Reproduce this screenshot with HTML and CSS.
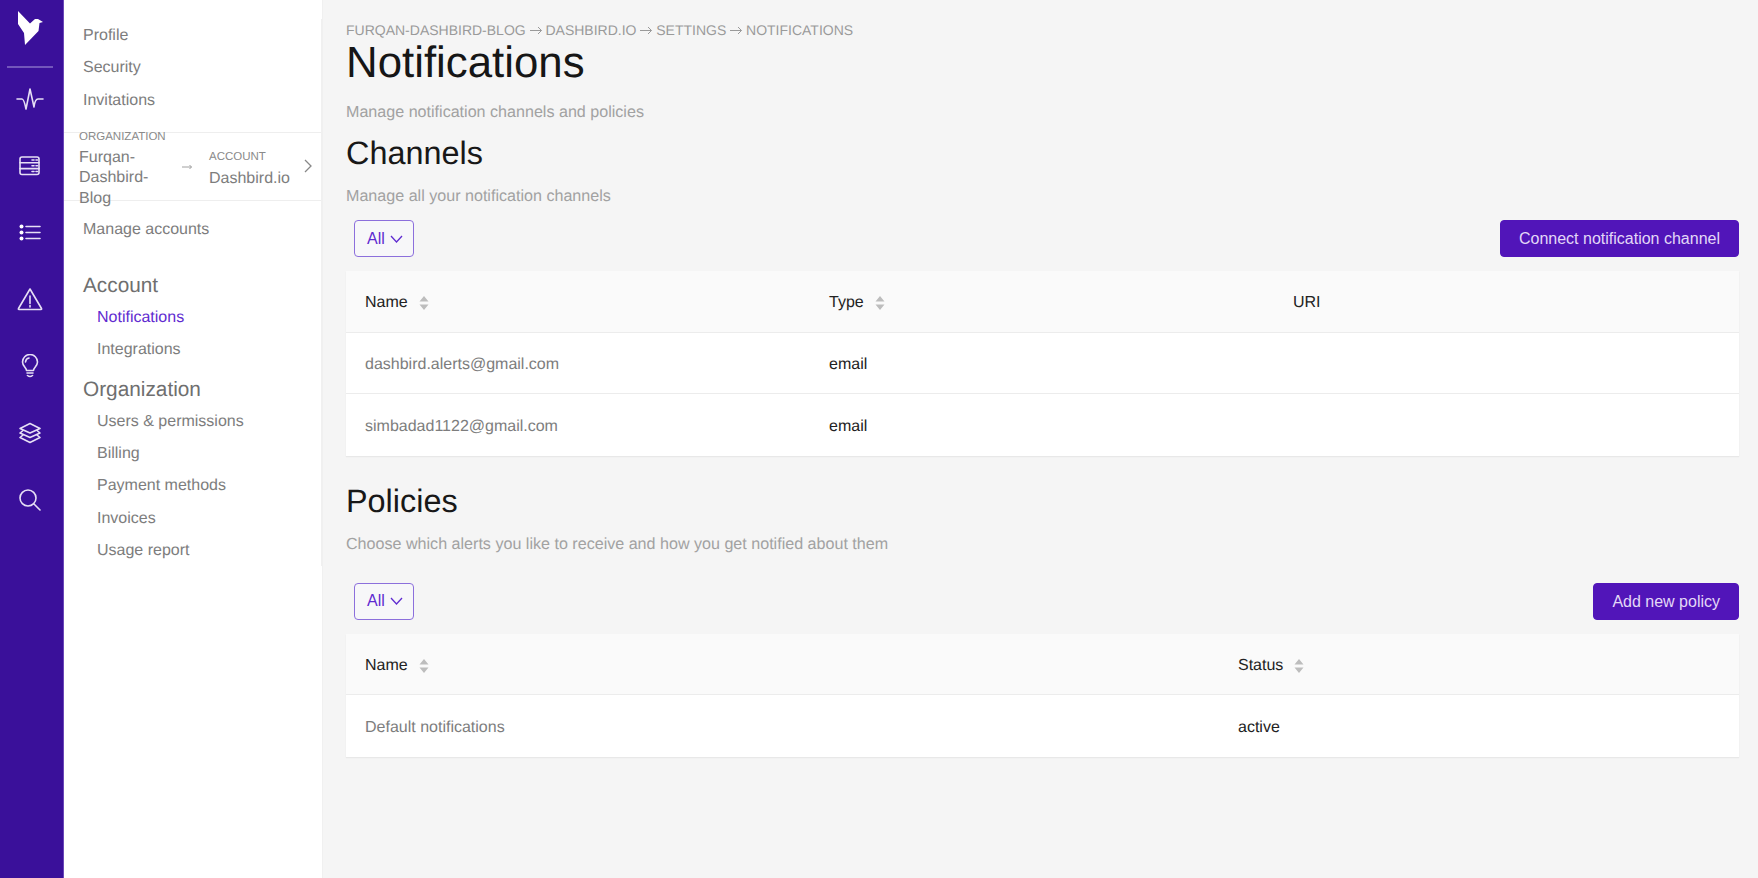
FILE: index.html
```html
<!DOCTYPE html>
<html lang="en">
<head>
<meta charset="utf-8">
<title>Notifications</title>
<link rel="stylesheet" href="styles.css">
</head>
<body>
<div class="app">
  <nav class="rail">
    <div class="logo">
      <svg width="27" height="36" viewBox="0 0 27 36"><path class="fill" d="M1 1 L13 13.500 L18 9 L21 9 L26 12 L22.500 13 L21.500 21 L8 35 L7 23 L1 14 Z"/></svg>
    </div>
    <div class="rail-sep"></div>
    <div class="rail-items">
      <a class="rail-item"><svg width="28" height="24" viewBox="0 0 28 24"><path d="M1 12 H6 Q8 12 10 22 L14 2 L18 20 Q19 12 22 12 H27"/></svg></a>
      <a class="rail-item"><svg width="22" height="20" viewBox="0 0 22 20"><rect x="1" y="1" width="19" height="17.500" rx="2"/><path d="M1 6.800H20M1 12.600H20M13 4H15M17 4H18.500M13 9.700H15M17 9.700H18.500M13 15.500H15M17 15.500H18.500"/></svg></a>
      <a class="rail-item"><svg width="22" height="20" viewBox="0 0 22 20"><path d="M7 4.500H21M7 10.500H21M7 16.500H21"/><circle class="fill" cx="2.500" cy="4.500" r="2"/><circle class="fill" cx="2.500" cy="10.500" r="2"/><circle class="fill" cx="2.500" cy="16.500" r="2"/></svg></a>
      <a class="rail-item"><svg width="26" height="24" viewBox="0 0 26 24"><path d="M13 2 L24.500 21.500 Q25 22.500 24 22.500 H2 Q1 22.500 1.500 21.500 Z"/><path d="M13 9V16.500M13 18.500V20"/></svg></a>
      <a class="rail-item"><svg width="18" height="24" viewBox="0 0 18 24"><path d="M5.500 16.500 C5.500 13.500 1.500 12 1.500 8 A7.500 7.500 0 0 1 16.500 8 C16.500 12 12.500 13.500 12.500 16.500 Z"/><path d="M4.500 8 A4.500 4.500 0 0 1 8 4M6 19H12M6.500 21.500Q9 23.500 11.500 21.500"/></svg></a>
      <a class="rail-item"><svg width="22" height="22" viewBox="0 0 22 22"><path d="M11 1.500 L21 6.500 L11 11 L1 6.500 Z"/><path d="M4 8.500 L1 11 L11 15.500 L21 11 L18 8.500"/><path d="M4 13 L1 15.500 L11 20.500 L21 15.500 L18 13"/></svg></a>
      <a class="rail-item"><svg width="22" height="22" viewBox="0 0 22 22"><circle cx="9" cy="9" r="8"/><path d="M15 15L21 21"/></svg></a>
    </div>
  </nav>

  <aside class="sidebar">
    <div class="panel">
      <ul class="menu menu-top">
        <li>Profile</li>
        <li>Security</li>
        <li>Invitations</li>
      </ul>
      <div class="switcher">
        <div class="org">
          <div class="caption">ORGANIZATION</div>
          <div class="org-name">Furqan-<br>Dashbird-<br>Blog</div>
        </div>
        <svg class="switch-arrow" width="10" height="6" viewBox="0 0 10 6"><path d="M0 3H9.500M7.500 1L9.500 3L7.500 5"/></svg>
        <div class="acct">
          <div class="caption">ACCOUNT</div>
          <div class="acct-name">Dashbird.io</div>
        </div>
        <svg class="switch-chevron" width="8" height="14" viewBox="0 0 8 14"><path d="M1 1 L7 7 L1 13"/></svg>
      </div>
      <ul class="menu">
        <li>Manage accounts</li>
      </ul>
      <h3 class="side-head side-head-account">Account</h3>
      <ul class="menu menu-sub">
        <li class="active">Notifications</li>
        <li>Integrations</li>
      </ul>
      <h3 class="side-head side-head-org">Organization</h3>
      <ul class="menu menu-sub">
        <li>Users &amp; permissions</li>
        <li>Billing</li>
        <li>Payment methods</li>
        <li>Invoices</li>
        <li>Usage report</li>
      </ul>
    </div>
  </aside>

  <main class="main">
    <div class="crumbs">FURQAN-DASHBIRD-BLOG <svg class="ca" width="12" height="9" viewBox="0 0 12 9"><path d="M0 4.500H11.500M8 1L11.500 4.500L8 8"/></svg> DASHBIRD.IO <svg class="ca" width="12" height="9" viewBox="0 0 12 9"><path d="M0 4.500H11.500M8 1L11.500 4.500L8 8"/></svg> SETTINGS <svg class="ca" width="12" height="9" viewBox="0 0 12 9"><path d="M0 4.500H11.500M8 1L11.500 4.500L8 8"/></svg> NOTIFICATIONS</div>
    <h1 class="title">Notifications</h1>
    <p class="sub sub-top">Manage notification channels and policies</p>

    <h2 class="section">Channels</h2>
    <p class="sub sub-channels">Manage all your notification channels</p>
    <div class="toolbar">
      <button class="filter">All <svg width="13" height="8" viewBox="0 0 13 8"><path d="M1 1 L6.500 7 L12 1"/></svg></button>
      <button class="primary">Connect notification channel</button>
    </div>
    <div class="table">
      <div class="row head cols3">
        <div class="cell">Name <svg class="sort" width="10" height="14" viewBox="0 0 10 14"><path d="M5 0L9.500 5.500H0.500ZM5 14L0.500 8.500H9.500Z"/></svg></div>
        <div class="cell">Type <svg class="sort" width="10" height="14" viewBox="0 0 10 14"><path d="M5 0L9.500 5.500H0.500ZM5 14L0.500 8.500H9.500Z"/></svg></div>
        <div class="cell">URI</div>
      </div>
      <div class="row cols3">
        <div class="cell muted">dashbird.alerts@gmail.com</div>
        <div class="cell">email</div>
        <div class="cell"></div>
      </div>
      <div class="row cols3">
        <div class="cell muted">simbadad1122@gmail.com</div>
        <div class="cell">email</div>
        <div class="cell"></div>
      </div>
    </div>

    <h2 class="section section-policies">Policies</h2>
    <p class="sub sub-policies">Choose which alerts you like to receive and how you get notified about them</p>
    <div class="toolbar toolbar-policies">
      <button class="filter">All <svg width="13" height="8" viewBox="0 0 13 8"><path d="M1 1 L6.500 7 L12 1"/></svg></button>
      <button class="primary">Add new policy</button>
    </div>
    <div class="table">
      <div class="row head cols2">
        <div class="cell">Name <svg class="sort" width="10" height="14" viewBox="0 0 10 14"><path d="M5 0L9.500 5.500H0.500ZM5 14L0.500 8.500H9.500Z"/></svg></div>
        <div class="cell">Status <svg class="sort" width="10" height="14" viewBox="0 0 10 14"><path d="M5 0L9.500 5.500H0.500ZM5 14L0.500 8.500H9.500Z"/></svg></div>
      </div>
      <div class="row cols2">
        <div class="cell muted">Default notifications</div>
        <div class="cell">active</div>
      </div>
    </div>
  </main>
</div>
</body>
</html>
```

FILE: styles.css
```css
* { box-sizing: border-box; }
html, body { margin: 0; height: 100%; overflow: hidden; }
body {
  font-family: "Liberation Sans", Arial, sans-serif;
  font-size: 16px;
  color: #111;
  background: #f5f5f5;
  text-rendering: geometricPrecision;
}
.app { display: flex; height: 878px; }

.rail {
  width: 64px;
  flex: none;
  background: #3a109a;
  border-right: 1px solid #6b48b8;
  padding-right: 3px;
  display: flex;
  flex-direction: column;
  align-items: center;
}
.rail svg { fill: none; stroke: #e6dff5; stroke-width: 1.600; stroke-linecap: round; stroke-linejoin: round; display: block; }
.rail svg .fill { fill: #fff; stroke: none; }
.logo { height: 66px; padding-top: 10px; width: 100%; display: flex; justify-content: center; }
.rail-sep { width: 46px; height: 2px; background: #7356bb; }
.rail-items { display: flex; flex-direction: column; margin-top: -2.500px; }
.rail-item { height: 66.800px; display: flex; align-items: center; justify-content: center; }

.sidebar {
  width: 259px;
  flex: none;
  background: #fff;
  border-right: 1px solid #f0f0f0;
  color: #7d7d7d;
  padding-top: 19px;
}
.panel { height: 547px; margin-right: -1px; border-right: 2px solid #f0f0f0; }
.menu { list-style: none; margin: 0; padding: 0 0 0 19px; }
.menu li { height: 32.300px; line-height: 34px; white-space: nowrap; }
.menu-top { margin-bottom: 16px; }
.menu-sub { padding-left: 33px; }
.menu .active { color: #5f2bd0; }

.switcher {
  height: 69px;
  margin-bottom: 12px;
  border-top: 1px solid #eeeeee;
  border-bottom: 1px solid #eeeeee;
  padding-left: 15px;
  display: flex;
  align-items: center;
}
.caption { font-size: 11.500px; line-height: 14px; color: #8a8a8a; }
.org { width: 97px; padding-top: 7px; }
.org-name { line-height: 20.500px; margin-top: 3.500px; }
.acct { width: 95px; padding-top: 6px; }
.acct-name { line-height: 20px; margin-top: 5px; }
.switch-arrow { width: 33px; padding: 0 17px 0 6px; fill: none; stroke: #a0a0a0; stroke-width: 1; overflow: visible; height: 6px; margin-top: 2px; flex: none; }
.switch-chevron { fill: none; stroke: #888; stroke-width: 1.300; flex: none; }

.side-head { margin: 0 0 1px; padding-left: 19px; font-size: 20.800px; font-weight: 400; line-height: 28px; color: #6f6f6f; }
.side-head-account { margin-top: 26.600px; }
.side-head-org { margin-top: 10.300px; }

.main { flex: 1; padding: 0 19px 0 23px; min-width: 0; }
.crumbs { padding-top: 21px; font-size: 14px; line-height: 18px; color: #9a9a9a; white-space: nowrap; }
.ca { fill: none; stroke: #9a9a9a; stroke-width: 1; }
.title { margin: 1px 0 0; font-size: 43.800px; font-weight: 400; line-height: 46px; color: #161616; }
.sub { margin: 0; font-size: 16.100px; line-height: 20px; color: #a2a2a2; }
.sub-top { margin-top: 16px; }
.section { margin: 0; font-size: 32.400px; font-weight: 400; line-height: 40px; color: #181818; }
.sub + .section { margin-top: 11px; }
.sub-channels { margin-top: 13px; }
.section-policies { margin-top: 25px; }
.sub-policies { margin-top: 13px; }

.toolbar {
  display: flex;
  justify-content: space-between;
  align-items: center;
  padding-left: 8px;
  margin-top: 14px;
  margin-bottom: 14px;
}
.toolbar-policies { margin-top: 28.500px; margin-bottom: 14px; }
button { font: inherit; height: 37px; border-radius: 4px; cursor: pointer; }
.filter {
  width: 60px;
  padding: 0 0 0 2px;
  background: #f7f7f9;
  border: 1px solid #8c6fdc;
  color: #5f2bd0;
  display: flex;
  align-items: center;
  justify-content: center;
  gap: 5px;
}
.filter svg { fill: none; stroke: #5f2bd0; stroke-width: 1.300; }
.primary {
  padding: 1px 18px 0;
  background: #5115b9;
  border: 1px solid #5115b9;
  color: #e3d8f7;
}

.table { background: #fff; box-shadow: 0 1px 1px #e8e8e8; }
.row { display: grid; height: 61.700px; border-bottom: 1px solid #ececec; align-items: center; }
.row:last-child { border-bottom: 0; }
.head { background: #fafafa; }
.cols3 { grid-template-columns: 464px 464px 1fr; }
.cols2 { grid-template-columns: 873px 1fr; }
.cell { padding: 4px 0 0 19px; color: #222; display: flex; align-items: center; gap: 11px; }
.muted { color: #7d7d7d; }
.sort { fill: #bdbdbd; }
```
